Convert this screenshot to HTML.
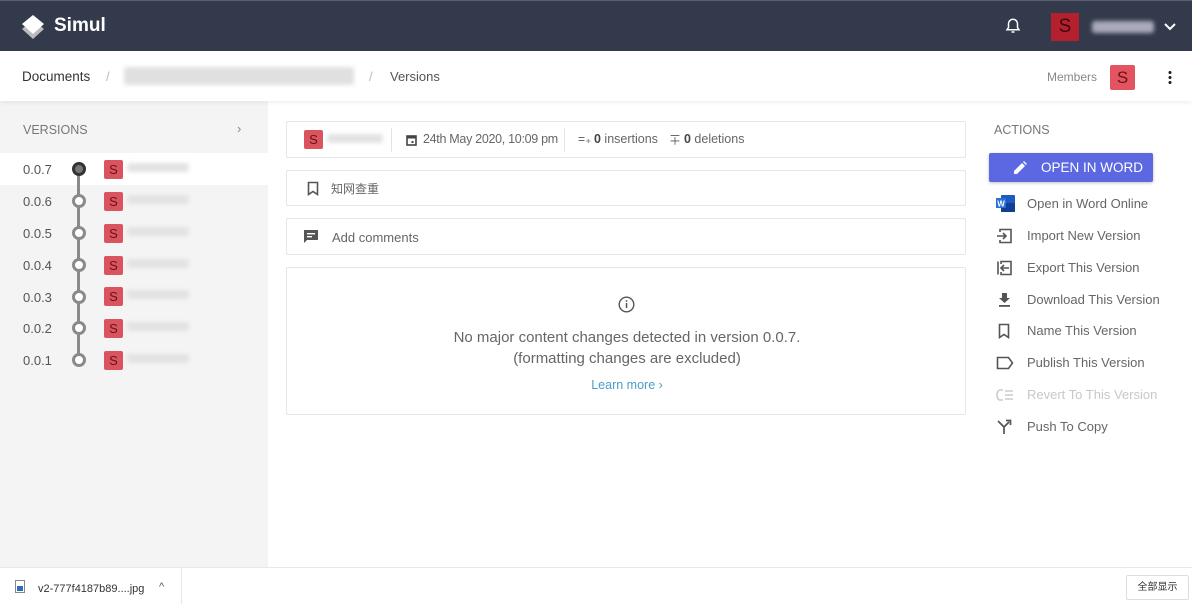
<!DOCTYPE html>
<html><head><meta charset="utf-8"><style>
*{box-sizing:border-box;margin:0;padding:0}
body{width:1192px;height:603px;overflow:hidden;background:#fff;font-family:"Liberation Sans","Noto Sans CJK SC",sans-serif;color:#555;position:relative}
.abs{position:absolute}
.hdr{left:0;top:0;width:1192px;height:51px;background:#323a4b;border-top:1px solid #5a6070}
.bc{left:0;top:51px;width:1192px;height:50px;background:#fff;box-shadow:0 2px 4px rgba(0,0,0,.06);z-index:2}
.side{left:0;top:101px;width:268px;height:466px;background:#f4f4f4}
.blur{background:#e2e2e2;filter:blur(2px);border-radius:3px}
.av{width:19px;height:19px;background:#d9545f;color:#6a1018;font-size:13px;text-align:center;line-height:19px;border-radius:2px}
.card{left:286px;width:680px;border:1px solid #e6e6e6;border-radius:2px;background:#fff}
.t{font-size:13px;white-space:nowrap}
.act{left:1027px;font-size:13px;color:#666;white-space:nowrap}
.ico{left:996px}
</style></head><body>
<div class="abs hdr">
 <svg class="abs" style="left:21px;top:13px" width="24" height="26" viewBox="0 0 24 26"><path d="M12 6 L23 15 L12 25 L1 15Z" fill="#bbb"/><path d="M12 1 L23 10 L12 20 L1 10Z" fill="#fff"/></svg>
 <div class="abs" style="left:54px;top:14px;color:#fff;font-weight:bold;font-size:19px">Simul</div>
 <svg class="abs" style="left:1004px;top:16px" width="18" height="18" viewBox="0 0 24 24"><path d="M12 3a6 6 0 0 0-6 6v5l-2 3h16l-2-3V9a6 6 0 0 0-6-6z" fill="none" stroke="#fff" stroke-width="2"/><path d="M10 20h4" stroke="#fff" stroke-width="2"/></svg>
 <div class="abs" style="left:1051px;top:12px;width:28px;height:28px;background:#b5202e;color:#3a0a0e;font-size:19px;text-align:center;line-height:28px">S</div>
 <div class="abs blur" style="left:1092px;top:20px;width:62px;height:12px;background:#aab"></div>
 <svg class="abs" style="left:1164px;top:21px" width="12" height="9" viewBox="0 0 12 9"><path d="M1 2l5 5 5-5" fill="none" stroke="#fff" stroke-width="2"/></svg>
</div>
<div class="abs bc">
 <div class="abs t" style="left:22px;top:18px;color:#333;font-size:13.5px">Documents</div>
 <div class="abs t" style="left:106px;top:18px;color:#bbb">/</div>
 <div class="abs blur" style="left:124px;top:16px;width:230px;height:18px;background:#e0e0e0"></div>
 <div class="abs t" style="left:369px;top:18px;color:#bbb">/</div>
 <div class="abs t" style="left:390px;top:18px;color:#555">Versions</div>
 <div class="abs t" style="left:1047px;top:19px;color:#888;font-size:12px">Members</div>
 <div class="abs" style="left:1110px;top:14px;width:25px;height:25px;background:#e2545f;color:#6a1018;font-size:17px;text-align:center;line-height:25px;border-radius:2px">S</div>
 <div class="abs" style="left:1168px;top:19px;width:4px;height:14px;background:radial-gradient(circle,#222 1.4px,transparent 1.6px) 0 0/4px 5px"></div>
</div>
<div class="abs side">
 <div class="abs t" style="left:23px;top:22px;color:#777;font-size:12.5px">VERSIONS</div>
 <div class="abs t" style="left:237px;top:20px;color:#888">›</div>
 <div class="abs" style="left:0;top:52px;width:268px;height:32px;background:#fff"></div>
 <div class="abs" style="left:77px;top:68px;width:3px;height:190px;background:#8a8a8a"></div>
</div>
<div class="abs" style="left:0;top:0">
 <div class="abs t" style="left:23px;top:162px">0.0.7</div>
 <div class="abs t" style="left:23px;top:194px">0.0.6</div>
 <div class="abs t" style="left:23px;top:226px">0.0.5</div>
 <div class="abs t" style="left:23px;top:258px">0.0.4</div>
 <div class="abs t" style="left:23px;top:290px">0.0.3</div>
 <div class="abs t" style="left:23px;top:321px">0.0.2</div>
 <div class="abs t" style="left:23px;top:353px">0.0.1</div>
 <div class="abs" style="left:72px;top:162px;width:14px;height:14px;border-radius:50%;background:#777;border:3px solid #333"></div>
 <div class="abs" style="left:72px;top:194px;width:14px;height:14px;border-radius:50%;background:#fff;border:3px solid #8a8a8a"></div>
 <div class="abs" style="left:72px;top:226px;width:14px;height:14px;border-radius:50%;background:#fff;border:3px solid #8a8a8a"></div>
 <div class="abs" style="left:72px;top:258px;width:14px;height:14px;border-radius:50%;background:#fff;border:3px solid #8a8a8a"></div>
 <div class="abs" style="left:72px;top:290px;width:14px;height:14px;border-radius:50%;background:#fff;border:3px solid #8a8a8a"></div>
 <div class="abs" style="left:72px;top:321px;width:14px;height:14px;border-radius:50%;background:#fff;border:3px solid #8a8a8a"></div>
 <div class="abs" style="left:72px;top:353px;width:14px;height:14px;border-radius:50%;background:#fff;border:3px solid #8a8a8a"></div>
 <div class="abs av" style="left:104px;top:160px">S</div><div class="abs blur" style="left:127px;top:163px;width:62px;height:9px"></div>
 <div class="abs av" style="left:104px;top:192px">S</div><div class="abs blur" style="left:127px;top:195px;width:62px;height:9px"></div>
 <div class="abs av" style="left:104px;top:224px">S</div><div class="abs blur" style="left:127px;top:227px;width:62px;height:9px"></div>
 <div class="abs av" style="left:104px;top:256px">S</div><div class="abs blur" style="left:127px;top:259px;width:62px;height:9px"></div>
 <div class="abs av" style="left:104px;top:287px">S</div><div class="abs blur" style="left:127px;top:290px;width:62px;height:9px"></div>
 <div class="abs av" style="left:104px;top:319px">S</div><div class="abs blur" style="left:127px;top:322px;width:62px;height:9px"></div>
 <div class="abs av" style="left:104px;top:351px">S</div><div class="abs blur" style="left:127px;top:354px;width:62px;height:9px"></div>
</div>
<div class="abs card" style="top:121px;height:37px">
 <div class="abs av" style="left:17px;top:8px">S</div>
 <div class="abs blur" style="left:40px;top:12px;width:56px;height:9px"></div>
 <div class="abs" style="left:104px;top:6px;width:1px;height:24px;background:#e3e3e3"></div>
 <svg class="abs" style="left:119px;top:12px" width="11" height="12" viewBox="0 0 11 12"><rect x="1" y="2" width="9" height="9" fill="none" stroke="#444" stroke-width="1.6"/><rect x="1" y="2" width="9" height="2.5" fill="#444"/><rect x="5.5" y="7" width="2" height="2" fill="#444"/></svg>
 <div class="abs t" style="left:136px;top:10px;color:#666;font-size:12.5px;letter-spacing:-0.3px">24th May 2020, 10:09 pm</div>
 <div class="abs" style="left:277px;top:6px;width:1px;height:24px;background:#e3e3e3"></div>
 <div class="abs t" style="left:291px;top:10px;color:#555;font-size:12px">=₊</div>
 <div class="abs t" style="left:307px;top:10px;color:#666;font-size:12.5px"><b style="color:#444">0</b> insertions</div>
 <div class="abs t" style="left:382px;top:9px;color:#555;font-size:12px">∓</div>
 <div class="abs t" style="left:397px;top:10px;color:#666;font-size:12.5px"><b style="color:#444">0</b> deletions</div>
</div>
<div class="abs card" style="top:170px;height:36px">
 <svg class="abs" style="left:20px;top:10px" width="12" height="15" viewBox="0 0 12 15"><path d="M1.5 1.5h9v12l-4.5-3-4.5 3z" fill="none" stroke="#555" stroke-width="1.6"/></svg>
 <div class="abs t" style="left:44px;top:9px;color:#666;font-size:12px">知网查重</div>
</div>
<div class="abs card" style="top:218px;height:37px">
 <svg class="abs" style="left:16px;top:10px" width="16" height="16" viewBox="0 0 16 16"><path d="M1 1h14v10H4l-3 3z" fill="#555"/><rect x="4" y="4" width="8" height="1.4" fill="#fff"/><rect x="4" y="7" width="5" height="1.4" fill="#fff"/></svg>
 <div class="abs t" style="left:45px;top:11px;color:#666">Add comments</div>
</div>
<div class="abs card" style="top:267px;height:148px">
 <svg class="abs" style="left:331px;top:28px" width="17" height="17" viewBox="0 0 17 17"><circle cx="8.5" cy="8.5" r="7.3" fill="none" stroke="#555" stroke-width="1.4"/><rect x="7.8" y="7" width="1.5" height="5" fill="#555"/><circle cx="8.5" cy="5" r="0.9" fill="#555"/></svg>
 <div class="abs" style="left:0;top:59px;width:680px;text-align:center;font-size:15px;color:#666;line-height:21px">No major content changes detected in version 0.0.7.<br>(formatting changes are excluded)</div>
 <div class="abs" style="left:0;top:110px;width:680px;text-align:center;font-size:12.5px;color:#4a9fc7">Learn more ›</div>
</div>
<div class="abs t" style="left:994px;top:123px;color:#777;font-size:12.5px">ACTIONS</div>
<div class="abs" style="left:989px;top:153px;width:164px;height:29px;background:#5b68e1;border-radius:2px;box-shadow:0 1px 3px rgba(0,0,0,.25)">
 <svg class="abs" style="left:25px;top:8px" width="13" height="13" viewBox="0 0 13 13"><path d="M0 13v-3l8-8 3 3-8 8z M9 1l1-1 3 3-1 1z" fill="#fff"/></svg>
 <div class="abs t" style="left:52px;top:7px;color:#fff;font-size:13.5px">OPEN IN WORD</div>
</div>
<svg class="abs ico" style="top:195px" width="19" height="17" viewBox="0 0 19 17"><rect x="5" y="0" width="14" height="17" rx="1" fill="#1d5bc0"/><rect x="5" y="8" width="14" height="9" fill="#103f94"/><rect x="0" y="3" width="10" height="10" fill="#2b6fd8"/><text x="1.3" y="11.5" font-size="8" font-weight="bold" fill="#fff" font-family="Liberation Sans">W</text></svg>
<div class="abs act" style="top:196px">Open in Word Online</div>
<svg class="abs ico" style="top:228px" width="17" height="16" viewBox="0 0 17 16"><path d="M4 4V1.5h11v13H4V12" fill="none" stroke="#555" stroke-width="1.6"/><path d="M1 8h9M7 5l3 3-3 3" fill="none" stroke="#555" stroke-width="1.6"/></svg>
<div class="abs act" style="top:228px">Import New Version</div>
<svg class="abs ico" style="top:260px" width="17" height="16" viewBox="0 0 17 16"><path d="M5 4V1.5h10v13H5V12" fill="none" stroke="#555" stroke-width="1.6"/><path d="M2 1.5v13" stroke="#555" stroke-width="1.6"/><path d="M13 8H5M8 5L5 8l3 3" fill="none" stroke="#555" stroke-width="1.6"/></svg>
<div class="abs act" style="top:260px">Export This Version</div>
<svg class="abs ico" style="top:292px" width="17" height="16" viewBox="0 0 17 16"><path d="M6 1h5v5h3l-5.5 5L3 6h3z" fill="#555"/><rect x="3" y="13" width="11" height="1.8" fill="#555"/></svg>
<div class="abs act" style="top:292px">Download This Version</div>
<svg class="abs ico" style="top:323px" width="17" height="16" viewBox="0 0 17 16"><path d="M3.5 1.5h9v13l-4.5-3-4.5 3z" fill="none" stroke="#555" stroke-width="1.6"/></svg>
<div class="abs act" style="top:323px">Name This Version</div>
<svg class="abs ico" style="top:356px" width="18" height="14" viewBox="0 0 18 14"><path d="M1.5 1.5h11l4 5.5-4 5.5h-11z" fill="none" stroke="#555" stroke-width="1.6"/></svg>
<div class="abs act" style="top:355px">Publish This Version</div>
<svg class="abs ico" style="top:388px" width="18" height="14" viewBox="0 0 18 14"><path d="M7 2H4a3 5 0 0 0 0 10h3" fill="none" stroke="#ccc" stroke-width="1.6"/><path d="M9 3h8M9 7h8M9 11h8" stroke="#ccc" stroke-width="1.5"/></svg>
<div class="abs act" style="top:387px;color:#c8c8c8">Revert To This Version</div>
<svg class="abs ico" style="top:419px" width="17" height="16" viewBox="0 0 17 16"><path d="M2 2l6 6v7M8 8l5-5" fill="none" stroke="#555" stroke-width="1.7"/><path d="M10 1.5h4.5V6" fill="none" stroke="#555" stroke-width="1.7"/></svg>
<div class="abs act" style="top:419px">Push To Copy</div>
<div class="abs" style="left:0;top:567px;width:1192px;height:36px;background:#fff;border-top:1px solid #e8e8e8">
 <svg class="abs" style="left:15px;top:12px" width="11" height="14" viewBox="0 0 11 14"><rect x=".5" y=".5" width="9" height="12" fill="#fff" stroke="#888"/><rect x="2" y="6" width="6" height="5" fill="#2a6fb8"/></svg>
 <div class="abs t" style="left:38px;top:15px;color:#333;font-size:11px">v2-777f4187b89....jpg</div>
 <div class="abs t" style="left:159px;top:13px;color:#555;font-size:11px">^</div>
 <div class="abs" style="left:181px;top:0;width:1px;height:36px;background:#e6e6e6"></div>
 <div class="abs" style="left:1126px;top:7px;width:63px;height:25px;border:1px solid #ddd;border-radius:2px;font-size:10px;color:#333;text-align:center;line-height:23px">全部显示</div>
</div>
</body></html>
